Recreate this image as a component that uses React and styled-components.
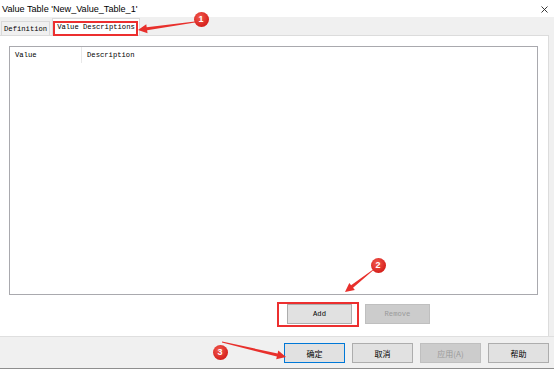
import React from "react";
import styled, { createGlobalStyle } from "styled-components";

const GlobalStyle = createGlobalStyle`
  html, body {
    margin: 0;
    padding: 0;
    background: #fff;
  }
  #root {
    width: 554px;
    height: 369px;
    overflow: hidden;
  }
`;

const Window = styled.div`
  position: relative;
  width: 554px;
  height: 369px;
  display: flex;
  flex-direction: column;
  background: #f0f0f0;
  font-family: "Liberation Sans", Arial, sans-serif;
  color: #000;
`;

const TitleBar = styled.div`
  height: 17px;
  flex: none;
  background: #fff;
  display: flex;
  align-items: center;
  justify-content: space-between;
  padding: 0 6px 0 2px;
  font-size: 9.1px;
`;

const CloseIcon = styled.svg`
  width: 7px;
  height: 7px;
  margin-top: 1px;
`;

const TabStrip = styled.div`
  height: 18px;
  flex: none;
  display: flex;
  align-items: flex-end;
  padding-left: 1px;
  gap: 2px;
`;

const Tab = styled.div`
  font-family: "Liberation Mono", "Courier New", monospace;
  font-size: 7.2px;
  display: flex;
  align-items: center;
  padding: 0 ${({ $active }) => ($active ? "4px" : "2px")};
  height: ${({ $active }) => ($active ? "17px" : "14px")};
  background: ${({ $active }) => ($active ? "#fff" : "#f0f0f0")};
  border: 1px solid #dadada;
  border-bottom: none;
  box-sizing: border-box;
`;

const Body = styled.div`
  flex: 1;
  display: flex;
`;

const Panel = styled.div`
  width: 549px;
  box-sizing: border-box;
  background: #fff;
  border-top: 1px solid #dcdcdc;
  border-right: 1px solid #dcdcdc;
  padding: 10px 10px 0 9px;
  display: flex;
  flex-direction: column;
`;

const ListView = styled.div`
  height: 249px;
  box-sizing: border-box;
  border: 1px solid #a9a9ae;
  background: #fff;
`;

const HeaderRow = styled.div`
  height: 16px;
  display: flex;
  font-family: "Liberation Mono", "Courier New", monospace;
  font-size: 7.2px;
`;

const HeaderCell = styled.div`
  width: ${({ $w }) => $w};
  box-sizing: border-box;
  display: flex;
  align-items: center;
  padding-left: 5px;
  border-right: ${({ $divider }) => ($divider ? "1px solid #e8e8e8" : "none")};
`;

const ButtonRow = styled.div`
  display: flex;
  gap: 13px;
  margin-top: 9px;
  padding-left: 278px;
`;

const Button = styled.div`
  width: ${({ $w }) => $w || "65px"};
  height: 20px;
  box-sizing: border-box;
  display: flex;
  align-items: center;
  justify-content: center;
  font-family: ${({ $cjk }) =>
    $cjk
      ? '"Noto Sans CJK SC", sans-serif'
      : '"Liberation Mono", "Courier New", monospace'};
  font-size: ${({ $cjk }) => ($cjk ? "8px" : "7.2px")};
  background: ${({ $disabled }) => ($disabled ? "#cccccc" : "#e1e1e1")};
  color: ${({ $disabled }) => ($disabled ? "#9a9a9a" : "#000")};
  border: ${({ $default }) => ($default ? "1.5px" : "1px")} solid
    ${({ $disabled, $default }) =>
      $default ? "#0078d7" : $disabled ? "#bfbfbf" : "#adadad"};
`;

const Gutter = styled.div`
  flex: 1;
  background: #f0f0f0;
`;

const Footer = styled.div`
  height: 33px;
  flex: none;
  box-sizing: border-box;
  border-top: 1px solid #dfdfdf;
  border-bottom: 1px solid #8e8e8e;
  display: flex;
  justify-content: flex-end;
  align-items: flex-start;
  gap: 7px;
  padding: 6px 5px 0 0;
`;

const Overlay = styled.svg`
  position: absolute;
  left: 0;
  top: 0;
  width: 554px;
  height: 369px;
  pointer-events: none;
`;

const RedBox = styled.div`
  position: absolute;
  left: ${({ $x }) => $x}px;
  top: ${({ $y }) => $y}px;
  width: ${({ $w }) => $w}px;
  height: ${({ $h }) => $h}px;
  box-sizing: border-box;
  border: 2px solid #ec2f2f;
  pointer-events: none;
`;

const Badge = styled.div`
  position: absolute;
  left: ${({ $x }) => $x - 7.5}px;
  top: ${({ $y }) => $y - 7.5}px;
  width: 15px;
  height: 15px;
  border-radius: 50%;
  background: radial-gradient(circle at 40% 35%, #f35a4f, #d6221d 70%);
  color: #fff;
  font-family: "Liberation Sans", Arial, sans-serif;
  font-weight: bold;
  font-size: 9px;
  display: flex;
  align-items: center;
  justify-content: center;
`;

// tapered annotation arrow from tail to tip
const arrowPoints = (x1, y1, x2, y2) => {
  const dx = x2 - x1;
  const dy = y2 - y1;
  const len = Math.hypot(dx, dy);
  const ux = dx / len;
  const uy = dy / len;
  const nx = -uy;
  const ny = ux;
  const headLen = 9;
  const headW = 4.5;
  const bx = x2 - ux * headLen;
  const by = y2 - uy * headLen;
  const pts = [
    [x1 + nx * 0.4, y1 + ny * 0.4],
    [bx + nx * 1.6, by + ny * 1.6],
    [bx + nx * headW, by + ny * headW],
    [x2, y2],
    [bx - nx * headW, by - ny * headW],
    [bx - nx * 1.6, by - ny * 1.6],
    [x1 - nx * 0.4, y1 - ny * 0.4],
  ];
  return pts.map((p) => p.join(",")).join(" ");
};

const arrows = [
  [195, 22, 138, 30],
  [373, 270, 345, 292],
  [222, 342, 286, 357],
];

const App = () => {
  return (
    <>
      <GlobalStyle />
      <Window>
        <TitleBar>
          <span>Value Table 'New_Value_Table_1'</span>
          <CloseIcon viewBox="0 0 7 7">
            <path d="M0.5 0.5 L6.5 6.5 M6.5 0.5 L0.5 6.5" stroke="#222" strokeWidth="0.9" />
          </CloseIcon>
        </TitleBar>
        <TabStrip>
          <Tab>Definition</Tab>
          <Tab $active>Value Descriptions</Tab>
        </TabStrip>
        <Body>
          <Panel>
            <ListView>
              <HeaderRow>
                <HeaderCell $w="72px" $divider>
                  Value
                </HeaderCell>
                <HeaderCell $w="auto">Description</HeaderCell>
              </HeaderRow>
            </ListView>
            <ButtonRow>
              <Button>Add</Button>
              <Button $disabled>Remove</Button>
            </ButtonRow>
          </Panel>
          <Gutter />
        </Body>
        <Footer>
          <Button $cjk $default $w="61px">
            确定
          </Button>
          <Button $cjk $w="61px">
            取消
          </Button>
          <Button $cjk $disabled $w="61px">
            应用(A)
          </Button>
          <Button $cjk $w="61px">
            帮助
          </Button>
        </Footer>

        <RedBox $x={53} $y={21} $w={85} $h={15} />
        <RedBox $x={277} $y={302} $w={82} $h={25} />
        <Overlay viewBox="0 0 554 369">
          {arrows.map((a, i) => (
            <polygon key={i} points={arrowPoints(...a)} fill="#e8302c" />
          ))}
        </Overlay>
        <Badge $x={201} $y={19}>1</Badge>
        <Badge $x={378} $y={265}>2</Badge>
        <Badge $x={220} $y={352}>3</Badge>
      </Window>
    </>
  );
};

export default App;
